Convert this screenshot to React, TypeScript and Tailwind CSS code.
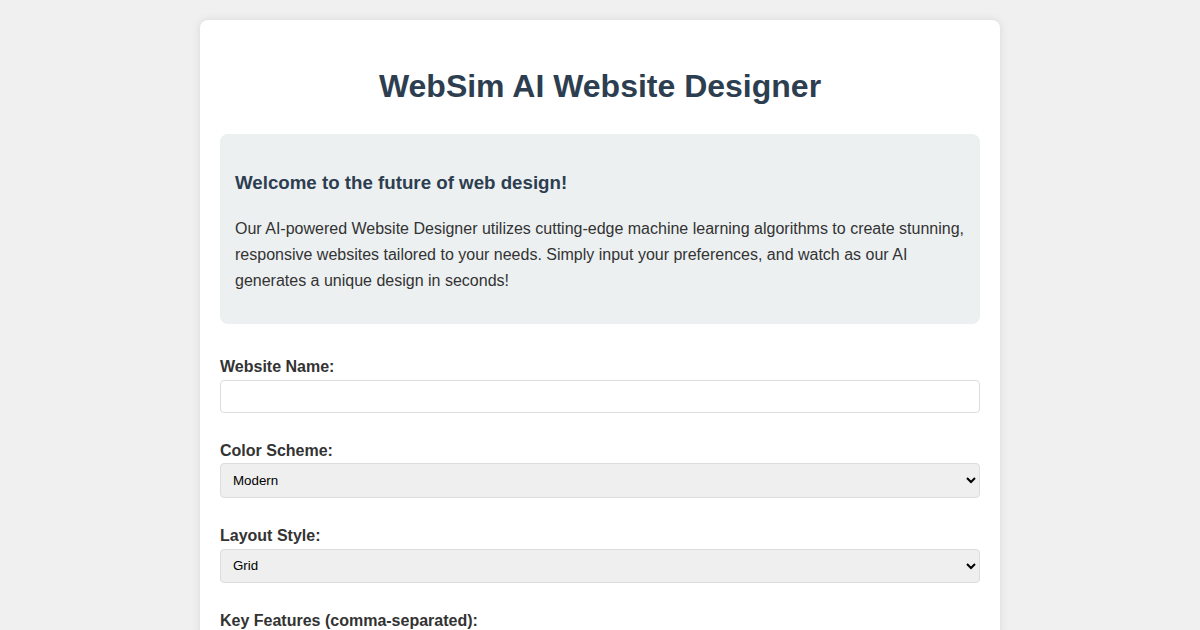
import { useState } from "react";

const Field = ({ label, children }: { label: string; children: React.ReactNode }) => (
  <div className="mb-[25px]">
    <label className="block font-bold leading-[1.6] text-[#333]">{label}</label>
    {children}
  </div>
);

const inputCls =
  "block h-[33px] w-full rounded-[4px] border border-[#ddd] bg-white px-[8px] text-[13.33px]";
const selectCls =
  "block h-[34.5px] w-full rounded-[4px] border border-[#ddd] bg-[#efefef] px-[8px] text-[13.33px] text-black";

export default function App() {
  const [form, setForm] = useState({
    name: "",
    colorScheme: "modern",
    layout: "grid",
    features: "",
  });

  return (
    <div
      className="min-h-screen bg-[#f0f0f0] py-[20px] text-[16px] leading-[1.6] text-[#333]"
      style={{ fontFamily: '"Liberation Sans", Arial, sans-serif' }}
    >
      <div className="mx-auto w-[800px] rounded-[8px] bg-white p-[20px] shadow-[0_0_10px_rgba(0,0,0,0.1)]">
        <h1 className="my-[21.44px] text-center text-[32px] font-bold leading-[1.6] text-[#2c3e50]">
          WebSim AI Website Designer
        </h1>

        <div className="rounded-[8px] bg-[#ecf0f1] p-[15px]">
          <h3 className="my-[18.72px] text-[18.72px] font-bold leading-[1.6] text-[#2c3e50]">
            Welcome to the future of web design!
          </h3>
          <p className="my-[16px]">
            Our AI-powered Website Designer utilizes cutting-edge machine learning algorithms to
            create stunning, responsive websites tailored to your needs. Simply input your
            preferences, and watch as our AI generates a unique design in seconds!
          </p>
        </div>

        <form className="mt-[30px]" onSubmit={(e) => e.preventDefault()}>
          <Field label="Website Name:">
            <input
              type="text"
              value={form.name}
              onChange={(e) => setForm({ ...form, name: e.target.value })}
              className={inputCls}
            />
          </Field>
          <Field label="Color Scheme:">
            <select
              value={form.colorScheme}
              onChange={(e) => setForm({ ...form, colorScheme: e.target.value })}
              className={selectCls}
            >
              <option value="modern">Modern</option>
              <option value="classic">Classic</option>
              <option value="vibrant">Vibrant</option>
              <option value="minimal">Minimal</option>
            </select>
          </Field>
          <Field label="Layout Style:">
            <select
              value={form.layout}
              onChange={(e) => setForm({ ...form, layout: e.target.value })}
              className={selectCls}
            >
              <option value="grid">Grid</option>
              <option value="single">Single Page</option>
              <option value="magazine">Magazine</option>
            </select>
          </Field>
          <Field label="Key Features (comma-separated):">
            <input
              type="text"
              value={form.features}
              onChange={(e) => setForm({ ...form, features: e.target.value })}
              className={inputCls}
            />
          </Field>
        </form>
      </div>
    </div>
  );
}
